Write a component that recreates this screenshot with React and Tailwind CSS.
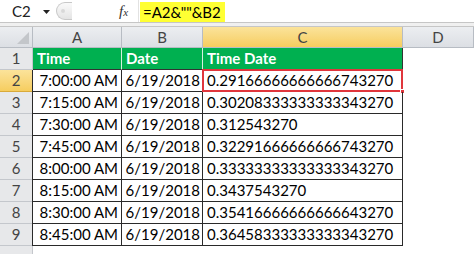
import React from 'react'

// Spreadsheet snapshot: concatenating a time and a date with =A2&""&B2
const rows = [
  ['7:00:00 AM', '6/19/2018', '0.29166666666666743270'],
  ['7:15:00 AM', '6/19/2018', '0.30208333333333343270'],
  ['7:30:00 AM', '6/19/2018', '0.312543270'],
  ['7:45:00 AM', '6/19/2018', '0.32291666666666743270'],
  ['8:00:00 AM', '6/19/2018', '0.33333333333333343270'],
  ['8:15:00 AM', '6/19/2018', '0.3437543270'],
  ['8:30:00 AM', '6/19/2018', '0.35416666666666643270'],
  ['8:45:00 AM', '6/19/2018', '0.36458333333333343270'],
]

const font = { fontFamily: 'Lato, "Open Sans", "Liberation Sans", sans-serif' }

function ColHeader({ label, active }) {
  return (
    <div
      className={
        'h-[21px] flex items-center justify-center border-r border-b border-[#b7bcc3] text-[15px] text-[#444] ' +
        (active
          ? 'bg-gradient-to-b from-[#fbe39a] to-[#f6cd5e]'
          : 'bg-gradient-to-b from-[#eceef1] to-[#dcdfe4]')
      }
    >
      {label}
    </div>
  )
}

function RowHeader({ n, active }) {
  return (
    <div
      className={
        'h-[22px] flex items-center justify-center border-r border-b text-[15px] text-[#444] ' +
        (active
          ? 'bg-gradient-to-b from-[#fbe39a] to-[#f6cd5e] border-[#d9aa3a]'
          : 'bg-[#e7e8ea] border-[#c4c7cc]')
      }
    >
      {n}
    </div>
  )
}

export default function App() {
  return (
    <div className="w-[474px] h-[254px] overflow-hidden bg-white text-black" style={font}>
      {/* Formula bar */}
      <div className="h-[23px] flex items-center border-b border-[#c6c6c6]">
        <div className="w-[56px] h-full flex items-center pl-[12px] relative">
          <span className="text-[15px] text-[#222]">C2</span>
          <svg className="absolute left-[43px] top-[10px]" width="7" height="4" viewBox="0 0 7 4">
            <path d="M0 0 L7 0 L3.5 4 Z" fill="#222" />
          </svg>
        </div>
        <div className="w-[16px] h-[18px] rounded-l-full border border-r-0 border-[#c8c8c8] bg-gradient-to-b from-[#fafafa] to-[#e4e4e4] flex items-center pl-[4px]">
          <div className="w-[4px] h-[4px] rounded-full bg-[#d8d8d8]" />
        </div>
        <div className="w-[47px]" />
        <span className="text-[15px] italic text-[#333] w-[19px]" style={{ fontFamily: '"Liberation Serif", serif' }}>
          f<span className="text-[11px]">x</span>
        </span>
        <div className="w-[1px] h-full bg-[#e2e2e2]" />
        <div className="ml-[1px] mt-[2px] h-[20px] w-[85px] bg-[#ffff33] flex items-center pl-[3px] text-[15px] text-black">
          =A2&amp;""&amp;B2
        </div>
      </div>
      <div className="h-[4px] bg-[#f0f0f0] border-b border-[#c6c6c6]" />

      {/* Sheet grid */}
      <div className="grid grid-cols-[33px_89px_81px_200px_71px]">
        {/* Column headers */}
        <div className="h-[21px] border-r border-b border-[#b7bcc3] bg-gradient-to-b from-[#eceef1] to-[#dcdfe4] relative">
          <svg className="absolute right-[3px] bottom-[3px]" width="12" height="12" viewBox="0 0 12 12">
            <path d="M12 0 L12 12 L0 12 Z" fill="#c3c6ca" />
          </svg>
        </div>
        <ColHeader label="A" />
        <ColHeader label="B" />
        <ColHeader label="C" active />
        <ColHeader label="D" />

        {/* Row 1: table header */}
        <RowHeader n={1} />
        <div className="h-[22px] bg-[#00b050] border-r border-b border-r-[#d6efdf] border-b-[#333] text-white font-bold text-[15px] flex items-center pl-[4px]">
          Time
        </div>
        <div className="h-[22px] bg-[#00b050] border-r border-b border-r-[#d6efdf] border-b-[#333] text-white font-bold text-[15px] flex items-center pl-[4px]">
          Date
        </div>
        <div className="h-[22px] bg-[#00b050] border-r border-b border-[#333] text-white font-bold text-[15px] flex items-center pl-[4px]">
          Time Date
        </div>
        <div className="h-[22px] border-r border-b border-white" />

        {/* Data rows */}
        {rows.map((r, i) => (
          <React.Fragment key={i}>
            <RowHeader n={i + 2} active={i === 0} />
            <div className="h-[22px] border-l border-r border-b border-[#2a2a2a] text-[15px] flex items-center justify-end pr-[3px] -ml-[1px]">
              {r[0]}
            </div>
            <div className="h-[22px] border-r border-b border-[#2a2a2a] text-[15px] flex items-center justify-end pr-[2px]">
              {r[1]}
            </div>
            <div className="h-[22px] border-r border-b border-[#2a2a2a] text-[15px] flex items-center pl-[4px] relative">
              {r[2]}
              {i === 0 && (
                <>
                  <div className="absolute -left-[1px] -top-[1px] -right-[1px] -bottom-[1px] border-2 border-[#e0363c]" />
                  <div className="absolute -right-[3px] -bottom-[3px] w-[5px] h-[5px] bg-[#e0363c] border border-white" />
                </>
              )}
            </div>
            <div className="h-[22px]" />
          </React.Fragment>
        ))}

        {/* Row 10 (only its top edge is visible) */}
        <RowHeader n="" />
        <div className="h-[22px]" />
        <div className="h-[22px]" />
        <div className="h-[22px]" />
        <div className="h-[22px]" />
      </div>
    </div>
  )
}
